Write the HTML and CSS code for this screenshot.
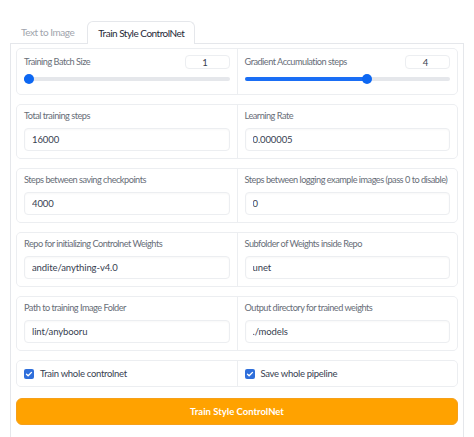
FILE: index.html
```html
<!DOCTYPE html>
<html>
<head>
    <meta charset="utf-8">
    <meta name="viewport" content="width=device-width, initial-scale=1">
    <title>Train Style ControlNet</title>
    <link rel="stylesheet" href="styles.css">
</head>
<body>
    <div class="app">
        <div class="tabs">
            <button class="tab">Text to Image</button>
            <button class="tab selected">Train Style ControlNet</button>
        </div>
        <div class="panel">
            <div class="form-row">
                <div class="block slider-block">
                    <div class="slider-head">
                        <span class="label">Training Batch Size</span>
                        <input class="number" type="text" value="1">
                    </div>
                    <div class="track">
                        <div class="fill" style="width: calc(5px + 0 * (100% - 10px))"><span class="thumb"></span></div>
                    </div>
                </div>
                <div class="block slider-block">
                    <div class="slider-head">
                        <span class="label">Gradient Accumulation steps</span>
                        <input class="number" type="text" value="4">
                    </div>
                    <div class="track">
                        <div class="fill" style="width: calc(5px + 0.6 * (100% - 10px))"><span class="thumb"></span></div>
                    </div>
                </div>
            </div>

            <div class="form-row">
                <label class="block">
                    <span class="label">Total training steps</span>
                    <input class="textbox" type="text" value="16000">
                </label>
                <label class="block">
                    <span class="label">Learning Rate</span>
                    <input class="textbox" type="text" value="0.000005">
                </label>
            </div>

            <div class="form-row">
                <label class="block">
                    <span class="label">Steps between saving checkpoints</span>
                    <input class="textbox" type="text" value="4000">
                </label>
                <label class="block">
                    <span class="label">Steps between logging example images (pass 0 to disable)</span>
                    <input class="textbox" type="text" value="0">
                </label>
            </div>

            <div class="form-row">
                <label class="block">
                    <span class="label">Repo for initializing Controlnet Weights</span>
                    <input class="textbox" type="text" value="andite/anything-v4.0">
                </label>
                <label class="block">
                    <span class="label">Subfolder of Weights inside Repo</span>
                    <input class="textbox" type="text" value="unet">
                </label>
            </div>

            <div class="form-row">
                <label class="block">
                    <span class="label">Path to training Image Folder</span>
                    <input class="textbox" type="text" value="lint/anybooru">
                </label>
                <label class="block">
                    <span class="label">Output directory for trained weights</span>
                    <input class="textbox" type="text" value="./models">
                </label>
            </div>

            <div class="form-row">
                <label class="block check-block">
                    <span class="checkbox"><svg viewBox="0 0 16 16"><path d="M4 8.3l2.6 2.6L12 5.4" fill="none" stroke="#fff" stroke-width="2.2" stroke-linecap="round" stroke-linejoin="round"/></svg></span>
                    <span class="check-text">Train whole controlnet</span>
                </label>
                <label class="block check-block">
                    <span class="checkbox"><svg viewBox="0 0 16 16"><path d="M4 8.3l2.6 2.6L12 5.4" fill="none" stroke="#fff" stroke-width="2.2" stroke-linecap="round" stroke-linejoin="round"/></svg></span>
                    <span class="check-text">Save whole pipeline</span>
                </label>
            </div>

            <button class="primary">Train Style ControlNet</button>
        </div>
    </div>
</body>
</html>
```
FILE: styles.css
```css
body {
    margin: 0;
    background: #fff;
    font-family: Lato, "Noto Sans", sans-serif;
    color: #374151;
}
.app {
    padding: 20px 10px 0 10px;
}
.tabs {
    display: flex;
    gap: 2px;
    height: 23px;
}
.tab {
    font-family: inherit;
    font-size: 10px;
    letter-spacing: -0.45px;
    color: #a1a5ad;
    background: none;
    border: 1px solid transparent;
    border-bottom: none;
    border-radius: 6px 6px 0 0;
    padding: 0 10px;
    margin: 0;
    cursor: pointer;
}
.tab.selected {
    color: #1f2937;
    background: #fff;
    border-color: #e5e7eb;
    position: relative;
    top: 1px;
    padding: 0 10px 1px 10px;
    letter-spacing: -0.5px;
}
.panel {
    border: 1px solid #e5e7eb;
    border-bottom: none;
    padding: 4px 5px 20px 5px;
    display: flex;
    flex-direction: column;
    gap: 9px;
}
.form-row {
    display: grid;
    grid-template-columns: minmax(0, 1fr) minmax(0, 1fr);
    gap: 1px;
    background: #eceef1;
    border: 1px solid #eceef1;
    border-radius: 5px;
    overflow: hidden;
}
.block {
    background: #fff;
    padding: 5px 7px 7px 7px;
    display: flex;
    flex-direction: column;
    gap: 6px;
}
.label {
    font-size: 9.2px;
    letter-spacing: -0.5px;
    line-height: 12px;
    color: #686e78;
    white-space: nowrap;
}
.textbox {
    font-family: inherit;
    font-size: 9.5px;
    letter-spacing: -0.1px;
    color: #374151;
    height: 23px;
    box-sizing: border-box;
    border: 1px solid #eceef1;
    border-radius: 4px;
    padding: 0 7px;
    margin: 0;
    box-shadow: inset 0 1px 2px rgba(0, 0, 0, 0.03);
    outline: none;
}
.slider-block {
    padding: 6px 7px 10px 7px;
    gap: 5px;
}
.slider-head {
    display: flex;
    justify-content: space-between;
    align-items: center;
    height: 14px;
}
.number {
    font-family: inherit;
    font-size: 9.5px;
    color: #374151;
    width: 45px;
    height: 14px;
    box-sizing: border-box;
    border: 1px solid #eceef1;
    border-radius: 4px;
    padding: 0 4px 0 0;
    margin: 0;
    text-align: center;
    outline: none;
}
.track {
    height: 4px;
    margin: 3px 0;
    background: #e5e7eb;
    border-radius: 2px;
}
.fill {
    position: relative;
    height: 100%;
    background: #1a6ef5;
    border-radius: 2px;
}
.thumb {
    position: absolute;
    right: -5px;
    top: -3px;
    width: 10px;
    height: 10px;
    border-radius: 50%;
    background: #0d67f2;
}
.check-block {
    flex-direction: row;
    align-items: center;
    gap: 6px;
    padding: 0 7px;
    height: 25px;
}
.checkbox {
    width: 10px;
    height: 10px;
    border-radius: 2px;
    background: #2f6fdb;
    display: flex;
}
.checkbox svg {
    width: 10px;
    height: 10px;
}
.check-text {
    font-size: 9.5px;
    letter-spacing: -0.3px;
    color: #374151;
}
.primary {
    margin-top: 2px;
    height: 27px;
    font-family: inherit;
    font-size: 9.5px;
    font-weight: bold;
    color: #fff;
    background: #ffa200;
    border: 1px solid #f6a01a;
    border-radius: 6px;
    cursor: pointer;
}
```
